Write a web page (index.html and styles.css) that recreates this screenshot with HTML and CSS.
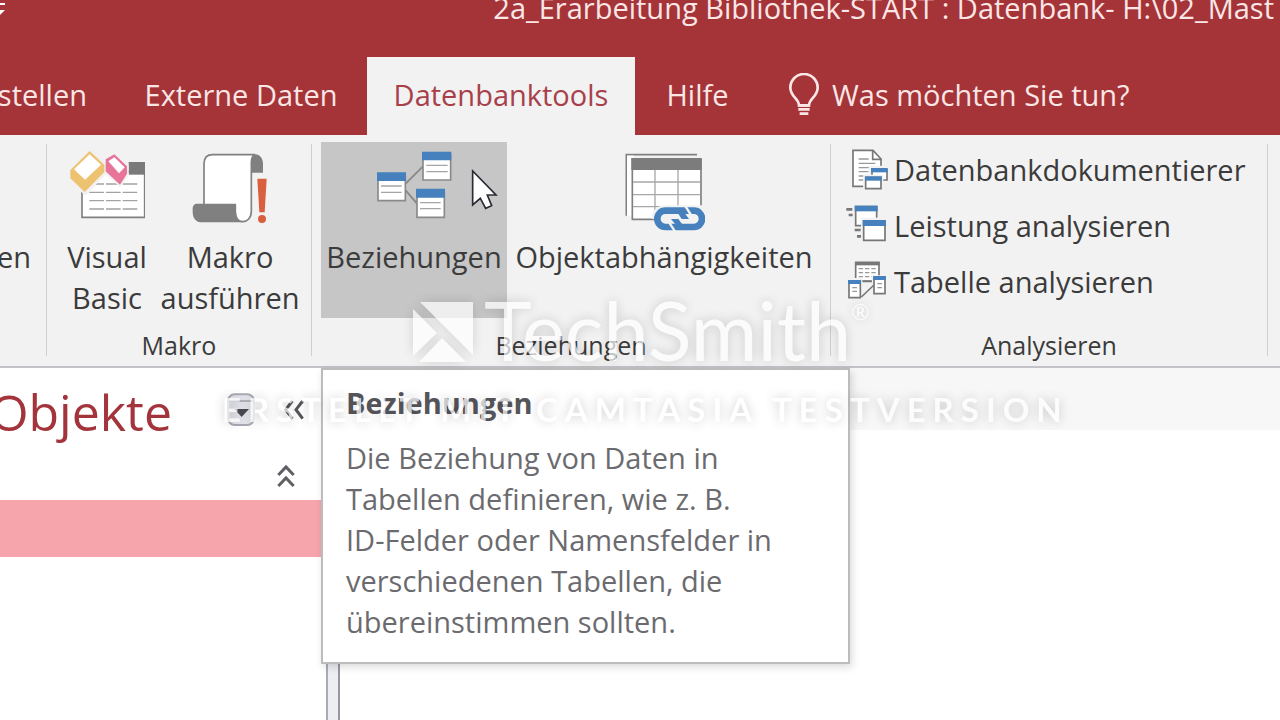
FILE: index.html
```html
<!DOCTYPE html>
<html lang="de">
<head>
    <meta charset="UTF-8">
    <meta name="viewport" content="width=device-width, initial-scale=1.0">
    <link rel="stylesheet" href="styles.css">
    <title>Datenbanktools</title>
</head>
<body>

<header class="titlebar">
    <button class="quick-menu" aria-label="Symbolleiste anpassen">
        <svg width="6" height="14" viewBox="0 0 6 14"><path d="M0 2h5" stroke="#fff" stroke-width="2"/><path d="M-4 8h9l-5 5z" fill="#fff"/></svg>
    </button>
    <div class="title">2a_Erarbeitung Bibliothek-START : Datenbank- H:\02_Mast</div>
</header>

<nav class="tabs">
    <button class="tab tab-cut">stellen</button>
    <button class="tab tab-wide">Externe Daten</button>
    <button class="tab active">Datenbanktools</button>
    <button class="tab tab-help">Hilfe</button>
    <button class="tell-me">
        <svg width="30" height="44" viewBox="0 0 90 132" fill="none" stroke="#fbe6e6" stroke-width="8">
            <path d="M30 97c0-20-26-26-26-53a41 41 0 0 1 82 0c0 27-26 33-26 53z"/>
            <path d="M28 97h34M28 109h34M32 122h26" stroke-width="8"/>
        </svg>
        Was möchten Sie tun?
    </button>
</nav>

<section class="ribbon">
    <div class="group group-cut">
        <button class="big-button">en</button>
    </div>
    <div class="separator"></div>

    <div class="group">
        <div class="buttons">
            <button class="big-button visual-basic">
                <svg width="76" height="82" viewBox="207 45 228 246">
                    <path d="M246 110h188v137H246z" fill="#fff" stroke="#808080" stroke-width="5"/>
                    <path d="M386 81h50v38h-50z" fill="#7a7a7a"/>
                    <path d="M268 147h144M268 172h144M268 197h144M268 222h144" stroke="#a2a2a2" stroke-width="4" stroke-dasharray="44 6"/>
                    <path d="M204 92l66-52 48 44v34l-62 64-52-48z" fill="#f2f2f2"/>
                    <path d="M314 70l30-18 42 38v34l-26 32-46-40z" fill="#f2f2f2"/>
                    <path d="M211 105l58-57 44 41v22l-59 60-43-41z" fill="#edc372"/>
                    <path d="M222 103l47-45 34 31-48 45z" fill="#fff"/>
                    <path d="M317 73l26-15 38 36v22l-21 33-43-40z" fill="#e8749a"/>
                    <path d="M325 79l18-12 31 30-17 18z" fill="#fff"/>
                </svg>
                Visual<br>Basic
            </button>
            <button class="big-button run-macro">
                <svg width="76" height="82" viewBox="576 45 228 246">
                    <path d="M745 58h20c16 0 24 14 24 28v27h-36V78z" fill="#808080"/>
                    <path d="M612 210V86c0-18 8-27 26-27h127c-8 4-11 12-11 22v148c0 20-12 31-26 31s-22-12-22-32v-18z" fill="#fff" stroke="#808080" stroke-width="5"/>
                    <path d="M592 206h116v24c0 18 8 28 20 32H606c-18 0-28-12-28-32v-8c0-10 4-16 14-16z" fill="#808080"/>
                    <path d="M772 131h28l-6 101h-16z" fill="#d9603f"/>
                    <circle cx="786" cy="252" r="12" fill="#d9603f"/>
                </svg>
                Makro<br>ausführen
            </button>
        </div>
        <div class="group-label">Makro</div>
    </div>
    <div class="separator"></div>

    <div class="group group-relations">
        <div class="buttons">
            <button class="big-button relations">
                <svg width="76" height="82" viewBox="183 45 228 246">
                    <path d="M324 94l-52 52M272 166l34 40" stroke="#8a8a8a" stroke-width="6"/>
                    <g fill="#fff" stroke="#8a8a8a" stroke-width="5">
                        <path d="M324 60h83v75h-83zM189 122h82v75h-82zM306 171h82v76h-82z"/>
                    </g>
                    <path d="M321 50h88v26h-88zM186 112h87v26h-87zM303 161h87v27h-87z" fill="#4680bd"/>
                    <path d="M334 91h64M334 110h64M198 153h62M198 172h62M315 203h62M315 221h62" stroke="#a5a5a5" stroke-width="4"/>
                </svg>
                Beziehungen
            </button>
            <button class="big-button dependencies">
                <svg width="82" height="82" viewBox="354 45 246 246">
                    <path d="M364 242V59h212" fill="none" stroke="#808080" stroke-width="5"/>
                    <path d="M366 62h20v180h-20z" fill="#fff"/>
                    <path d="M382 72h206v181H382z" fill="#fff" stroke="#808080" stroke-width="5"/>
                    <path d="M379 69h211v36H379z" fill="#7c7c7c"/>
                    <path d="M384 141h202M384 179h202M384 215h202M450 105v148M519 105v148" stroke="#a8a8a8" stroke-width="4"/>
                    <path d="M440 251c0-24 17-40 40-40h122v40z" fill="#f2f2f2"/>
                    <rect x="457" y="227" width="134" height="49" rx="24" fill="#f2f2f2" stroke="#4680bd" stroke-width="20"/>
                    <path d="M516 230h20l16 22h-22zM498 252h22l16 22h-20z" fill="#4680bd"/>
                    <path d="M540 212l22 34M488 256l24 36" stroke="#f2f2f2" stroke-width="7"/>
                </svg>
                Objektabhängigkeiten
            </button>
        </div>
        <div class="group-label">Beziehungen</div>
    </div>
    <div class="separator"></div>

    <div class="group group-analyze">
        <div class="list">
            <button class="small-button">
                <svg width="44" height="42" viewBox="45 42 132 126">
                    <path d="M69 46h60l24 26v82H69z" fill="#fff" stroke="#777" stroke-width="5"/>
                    <path d="M128 46v27h26" fill="none" stroke="#777" stroke-width="5"/>
                    <path d="M86 72h30M86 85h50M86 98h50M86 110h30M86 123h20M86 135h14" stroke="#999" stroke-width="4"/>
                    <path d="M116 92h60v46h-18v30h-58v-50h16z" fill="#f2f2f2"/>
                    <path d="M126 104h45v31h-45z" fill="#fff" stroke="#777" stroke-width="5"/>
                    <path d="M123 99h50v13h-50z" fill="#4680bd"/>
                    <path d="M100 119h60v46h-60z" fill="#f2f2f2"/>
                    <path d="M107 127h46v34h-46z" fill="#fff" stroke="#777" stroke-width="5"/>
                    <path d="M105 124h50v13h-50z" fill="#4680bd"/>
                </svg>
                Datenbankdokumentierer
            </button>
            <button class="small-button">
                <svg width="44" height="42" viewBox="45 210 132 126">
                    <path d="M77 215h63v57H77z" fill="#fff" stroke="#777" stroke-width="5"/>
                    <path d="M74 212h69v17H74z" fill="#4680bd"/>
                    <path d="M93 248h78v74H93z" fill="#f2f2f2"/>
                    <path d="M101 258h64v58h-64z" fill="#fff" stroke="#777" stroke-width="5"/>
                    <path d="M98 255h70v18H98z" fill="#4680bd"/>
                    <path d="M49 223h18M56 240h12M74 285h18M81 304h12" stroke="#777" stroke-width="8"/>
                </svg>
                Leistung analysieren
            </button>
            <button class="small-button">
                <svg width="44" height="42" viewBox="45 378 132 126">
                    <path d="M77 383h70v55H77z" fill="#fff" stroke="#777" stroke-width="5"/>
                    <path d="M75 380h74v11H75z" fill="#777"/>
                    <path d="M86 401h52M86 413h52M86 425h52" stroke="#999" stroke-width="4" stroke-dasharray="13 6"/>
                    <path d="M51 429h46v28h28v-36h46v60h-46l-30 14H51z" fill="#f2f2f2"/>
                    <path d="M94 486l38-36M98 439h28" stroke="#777" stroke-width="5"/>
                    <path d="M57 438h34v50H57zM132 426h33v50h-33z" fill="#fff" stroke="#777" stroke-width="5"/>
                    <path d="M54 435h39v12H54zM130 423h38v12h-38z" fill="#4680bd"/>
                    <path d="M67 458h14M67 469h14M142 446h14M142 458h14" stroke="#999" stroke-width="4"/>
                </svg>
                Tabelle analysieren
            </button>
        </div>
        <div class="group-label">Analysieren</div>
    </div>
    <div class="separator"></div>
</section>

<main class="workspace">
    <aside class="nav-pane">
        <div class="pane-header">
            <h1>Objekte</h1>
            <button class="pane-menu" aria-label="Objekte filtern">
                <svg width="32" height="34" viewBox="0 0 96 102">
                    <rect x="9" y="4" width="78" height="92" rx="20" fill="#e4e4ec" stroke="#a9a9b4" stroke-width="6"/>
                    <path d="M12 24h72" stroke="#a9a9b4" stroke-width="5"/>
                    <path d="M28 48h44L50 72z" fill="#4a4a52"/>
                </svg>
            </button>
            <button class="pane-close" aria-label="Bereich schließen">
                <svg width="22" height="20" viewBox="0 0 66 60" fill="none" stroke="#55555a" stroke-width="9"><path d="M28 3L8 29l20 27M59 3L39 29l20 27"/></svg>
            </button>
        </div>
        <button class="collapse" aria-label="Gruppe reduzieren">
            <svg width="18" height="24" viewBox="0 0 54 72" fill="none" stroke="#5f5f64" stroke-width="9"><path d="M4 33L27 9l23 24M4 66l23-24 23 24"/></svg>
        </button>
        <div class="selected-row"></div>
    </aside>
    <div class="splitter"></div>
    <div class="document">
        <div class="document-bar"></div>
    </div>

    <div class="tooltip" role="tooltip">
        <h2>Beziehungen</h2>
        <p>Die Beziehung von Daten in<br>Tabellen definieren, wie z. B.<br>ID-Felder oder Namensfelder in<br>verschiedenen Tabellen, die<br>übereinstimmen sollten.</p>
    </div>
</main>

<div class="watermark">
    <div class="brand">
        <svg width="62" height="62" viewBox="0 0 62 62" fill="#fff">
            <path d="M8 1h53v53zM1 8l24 24L1 55zM30 37l24 24H7z"/>
        </svg>
        <span>TechSmith</span><sup>®</sup>
    </div>
    <div class="caption">ERSTELLT MIT CAMTASIA TESTVERSION</div>
</div>

<svg class="cursor" width="28" height="42" viewBox="469 102 84 126">
    <path d="M474 108v102l23-20 16 30 18-8-13-32h26z" fill="#fff" stroke="#2b2b35" stroke-width="5"/>
</svg>

</body>
</html>
```
FILE: styles.css
```css
* {
    box-sizing: border-box;
}

body {
    margin: 0;
    min-height: 100vh;
    display: flex;
    flex-direction: column;
    position: relative;
    overflow: hidden;
    font-family: "Open Sans", "Noto Sans", sans-serif;
    font-size: 29px;
    color: #3b3b3b;
    background-color: #fff;
}

button {
    border: none;
    padding: 0;
    margin: 0;
    background: none;
    font: inherit;
    color: inherit;
    white-space: nowrap;
}

svg {
    display: block;
    flex-shrink: 0;
}

.titlebar {
    display: flex;
    height: 57px;
    overflow: hidden;
    background-color: #a43438;
    color: #fbe6e6;
}

.quick-menu {
    display: flex;
    padding-top: 2px;
}

.title {
    margin: -12px 0 0 auto;
    padding-right: 6px;
    line-height: 40px;
    white-space: nowrap;
}

.tabs {
    display: flex;
    height: 78px;
    background-color: #a43438;
    color: #fbe6e6;
}

.tab,
.tell-me {
    padding-bottom: 3px;
}

.tab-cut {
    width: 115px;
    padding-right: 28px;
    display: flex;
    align-items: center;
    justify-content: flex-end;
}

.tab-wide {
    width: 252px;
}

.active {
    width: 268px;
    background-color: #f2f2f2;
    color: #a8404a;
}

.tab-help {
    width: 125px;
}

.tell-me {
    display: flex;
    align-items: center;
    gap: 13px;
    padding-left: 29px;
}

/* ribbon */
.ribbon {
    display: flex;
    height: 233px;
    padding-top: 7px;
    background-color: #f2f2f2;
    border-bottom: 2px solid #c4c4c8;
}

.separator {
    width: 1px;
    margin: 2px 0 10px;
    background-color: #cfcfcf;
}

.group {
    padding: 0 9px;
}

.group-cut {
    width: 46px;
    padding: 94px 15px 0 0;
    display: flex;
    justify-content: flex-end;
    align-items: flex-start;
}

.group-cut .big-button {
    height: auto;
    padding: 0;
}

.group-analyze {
    width: 436px;
    padding: 0 14px;
}

.buttons {
    display: flex;
}

.big-button {
    display: flex;
    flex-direction: column;
    align-items: center;
    height: 176px;
    padding-top: 8px;
    line-height: 41px;
    text-align: center;
}

.big-button svg {
    margin: 0 auto 4px;
}

.visual-basic {
    width: 102px;
    display: block;
}

.run-macro {
    width: 144px;
    display: block;
}

.relations {
    width: 186px;
    background-color: #c6c6c6;
}

.dependencies {
    width: 314px;
}

.list {
    height: 176px;
}

.small-button {
    display: flex;
    align-items: center;
    gap: 5px;
    height: 56px;
    padding-bottom: 1px;
}

.group-label {
    margin-top: 8px;
    font-size: 25px;
    line-height: 38px;
    text-align: center;
}

/* area under the ribbon */
.workspace {
    flex: 1;
    display: flex;
    position: relative;
}

.nav-pane {
    width: 326px;
    overflow: hidden;
}

.pane-header {
    display: flex;
    align-items: center;
    justify-content: flex-end;
    height: 84px;
    padding-right: 21px;
}

.pane-header h1 {
    margin: 0 53px 0 0;
    padding-top: 4px;
    font-size: 50px;
    font-weight: normal;
    line-height: 68px;
    color: #a4343c;
}

.pane-close {
    margin-left: 26px;
}

.collapse {
    display: flex;
    align-items: center;
    margin-left: auto;
    padding-right: 31px;
    height: 48px;
}

.selected-row {
    height: 57px;
    background-color: #f7a5ad;
}

.splitter {
    width: 14px;
    background-color: #eceef4;
    border-left: 2px solid #a9acb5;
    border-right: 2px solid #96989f;
}

.document {
    flex: 1;
}

.document-bar {
    height: 62px;
    background-color: #f7f7f7;
}

.tooltip {
    position: absolute;
    top: 0;
    left: 321px;
    width: 529px;
    padding: 12px 23px 20px;
    background-color: #fff;
    border: 2px solid #bcbcbc;
    box-shadow: 2px 3px 8px rgba(0, 0, 0, 0.15);
    color: #6b6b6f;
    line-height: 41px;
}

.tooltip h2 {
    margin: 0 0 14px;
    font-size: 29px;
    line-height: 41px;
    color: #55555a;
}

.tooltip p {
    margin: 0;
}

.watermark {
    position: absolute;
    top: 301px;
    left: 222px;
    color: #fff;
    font-family: Lato, sans-serif;
    opacity: 0.7;
    pointer-events: none;
}

.brand {
    display: flex;
    margin-left: 190px;
    font-size: 81px;
    line-height: 58px;
    text-shadow: 0 0 12px rgba(0, 0, 0, 0.25);
}

.brand svg {
    margin-right: 10px;
    filter: drop-shadow(0 0 6px rgba(0, 0, 0, 0.2));
}

.brand sup {
    font-size: 22px;
    line-height: 22px;
}

.caption {
    margin-top: 26px;
    font-size: 33px;
    font-weight: bold;
    line-height: 40px;
    letter-spacing: 7px;
    white-space: nowrap;
    text-shadow: 0 0 12px rgba(0, 0, 0, 0.3);
}

.cursor {
    position: absolute;
    top: 169px;
    left: 471px;
}
```
